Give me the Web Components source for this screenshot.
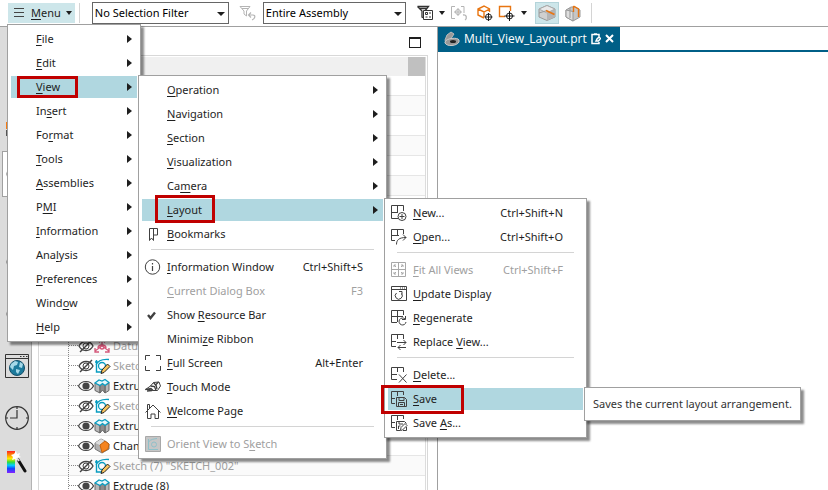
<!DOCTYPE html>
<html lang="en">
<head>
<meta charset="utf-8">
<title>Multi_View_Layout.prt</title>
<style>
  body {
    margin: 0;
    height: 100vh;
    overflow: hidden;
    background: #fff;
    color: #1e1e1e;
    font: 11px/20px "Noto Sans", "Open Sans", sans-serif;
  }
</style>
</head>
<body>
<nx-app>
  <nx-toolbar slot="toolbar">
    <nx-menu-button>
      <nx-menu style="--menu-width: 134px">
        <nx-item label="&amp;File" more></nx-item>
        <nx-item label="&amp;Edit" more></nx-item>
        <nx-item label="&amp;View" more active mark style="--mark: 1px auto auto 6px; --mark-width: 61px; --mark-height: 22px">
          <nx-menu slot="over" style="--menu-width: 249px">
            <nx-item label="&amp;Operation" more></nx-item>
            <nx-item label="&amp;Navigation" more></nx-item>
            <nx-item label="&amp;Section" more></nx-item>
            <nx-item label="&amp;Visualization" more></nx-item>
            <nx-item label="Ca&amp;mera" more></nx-item>
            <nx-item label="&amp;Layout" more active mark style="--mark: -3px auto auto 13px; --mark-width: 60px; --mark-height: 28px">
              <nx-menu slot="over" style="--menu-width: 203px">
                <nx-item label="&amp;New..." icon="new" keys="Ctrl+Shift+N"></nx-item>
                <nx-item label="&amp;Open..." icon="open" keys="Ctrl+Shift+O"></nx-item>
                <nx-separator></nx-separator>
                <nx-item label="&amp;Fit All Views" icon="fit" keys="Ctrl+Shift+F" disabled></nx-item>
                <nx-item label="&amp;Update Display" icon="update"></nx-item>
                <nx-item label="&amp;Regenerate" icon="regenerate"></nx-item>
                <nx-item label="Replace &amp;View..." icon="replace"></nx-item>
                <nx-separator></nx-separator>
                <nx-item label="&amp;Delete..." icon="delete"></nx-item>
                <nx-item label="&amp;Save" icon="save" active mark style="--mark: -2px auto auto -7px; --mark-width: 83px; --mark-height: 29px">
                  <nx-tooltip slot="over">Saves the current layout arrangement.</nx-tooltip>
                </nx-item>
                <nx-item label="Save &amp;As..." icon="saveas"></nx-item>
              </nx-menu>
            </nx-item>
            <nx-item label="&amp;Bookmarks" icon="bookmark"></nx-item>
            <nx-separator></nx-separator>
            <nx-item label="&amp;Information Window" icon="info" keys="Ctrl+Shift+S"></nx-item>
            <nx-item label="&amp;Current Dialog Box" keys="F3" disabled></nx-item>
            <nx-item label="Show &amp;Resource Bar" icon="check"></nx-item>
            <nx-item label="Minimi&amp;ze Ribbon"></nx-item>
            <nx-item label="&amp;Full Screen" icon="full" keys="Alt+Enter"></nx-item>
            <nx-item label="&amp;Touch Mode" icon="touch"></nx-item>
            <nx-item label="&amp;Welcome Page" icon="home"></nx-item>
            <nx-separator></nx-separator>
            <nx-item label="Orient View to S&amp;ketch" icon="orient" disabled></nx-item>
          </nx-menu>
        </nx-item>
        <nx-item label="In&amp;sert" more></nx-item>
        <nx-item label="Fo&amp;rmat" more></nx-item>
        <nx-item label="&amp;Tools" more></nx-item>
        <nx-item label="&amp;Assemblies" more></nx-item>
        <nx-item label="P&amp;MI" more></nx-item>
        <nx-item label="&amp;Information" more></nx-item>
        <nx-item label="Ana&amp;lysis" more></nx-item>
        <nx-item label="&amp;Preferences" more></nx-item>
        <nx-item label="Wind&amp;ow" more></nx-item>
        <nx-item label="&amp;Help" more></nx-item>
      </nx-menu>
    </nx-menu-button>
  </nx-toolbar>
  <nx-rail slot="rail"></nx-rail>
  <nx-navigator slot="navigator"></nx-navigator>
  <nx-graphics slot="graphics" name="Multi_View_Layout.prt"></nx-graphics>
</nx-app>

<script>
// 16px glyphs, stroked with the current colour
const ICONS = {
  new: '<path d="M7 13.500H.5V.5H12.500V6M.5 7.500H6.500M6.500 .5V8"/><circle cx="11" cy="11.500" r="4"/><path d="M8.500 11.500h5M11 9v5"/>',
  open: '<path d="M4 11.500H.5V.5H12.500V5M.5 6.500H8M6.500 .5V6.500"/><path d="M5.500 15.500C5.500 11 8 8.500 15 8.500M12 5.500l3 3-3 3"/>',
  fit: '<path d="M.5 .5h14v14H.5zM7.500 .5v14M.5 7.500h14M3 5V3h2M3 3l2 2M10 3h2v2M12 3l-2 2M3 10v2h2M3 12l2-2M10 12h2v-2M12 12l-2-2"/>',
  update: '<path d="M.5 .5h15v14H.5zM.5 3.500h15M9 2h1M11 2h1M13 2h1"/><path d="M5.500 7A3.500 3.500 0 1 0 10.500 7.500M8 5.500h3v3"/>',
  regenerate: '<path d="M6 12.500H.5V.5H12.500V5M.5 6.500H12M6.500 .5V12"/><path d="M14 9A3.500 3.500 0 1 0 15 12M14.500 6v3.500H11"/>',
  replace: '<path d="M5 12.500H.5V.5H12.500V5M.5 7.500H5M6.500 .5V5"/><path d="M6 8.500h9M12.500 6l2.500 2.500-2.500 2.500M15 13.500H7M9.500 11L7 13.500 9.500 16"/>',
  delete: '<path d="M6 12.500H.5V.5H12.500V5M.5 7.500H6M6.500 .5V5"/><path d="M8 7.500l7.500 8M15.500 7.500l-7.500 8"/>',
  save: '<path d="M4 12.500H.5V.5H12.500V4M.5 7.500H4M6.500 .5V5"/><path d="M5.500 6.500h8l2 2v7h-10zM8 6.500v3h5v-3M7.500 15.500v-4h6v4M9 13.500h3"/>',
  saveas: '<path d="M4 12.500H.5V.5H12.500V4M.5 7.500H4M6.500 .5V5"/><path d="M9 15.500H5.500v-9h8l2 2M8 6.500v2.500h4M7.500 14v-3h2M10 12.500l4-4 2 2-4.500 4.500-2 .5z M15.500 12v3.500H12"/>',
  bookmark: '<path d="M4.500 2.500v12l2-2.500 2 2.500V9M4.500 2.500h8v6.500H8.500V2.500"/>',
  info: '<circle cx="7.500" cy="8" r="7.200"/><path d="M7.500 7v5M7.500 4v1.500" stroke-width="1.200"/>',
  check: '<path d="M3 8l2.500 3L10 5.500" stroke-width="2.400"/>',
  full: '<path d="M.5 5V.5H5M11 .5h4.500V5M15.500 11v4.500H11M5 15.500H.5V11"/>',
  touch: '<path d="M.5 10.500l5-3.500 3-3.500 5.500-.5 1.500 4-3 4.500H8l-2.500-1z" /><path d="M.5 10.500l5.500-1 2 2M2 12l5-.5M5.500 7l4 .5 1.500 4M8.500 3.500l2.500 3M11 5.500l2.500-2.500M11 6l1 4" stroke-width="1.300"/>',
  home: '<path d="M.5 9.500L8 2l7.500 7.500M2.500 8v7.500h3.500V11h4v4.500h3.500V8M2.500 7V1.500h2V5"/>',
  orient: '<path d="M.5 .5h15v15H.5z" fill="#c6c6c6" stroke="#a8a8a8"/><g stroke="#8fc0c9"><path d="M3.500 3v10.500H13M3.500 6C6 3 9 3 12 2.500"/><circle cx="9" cy="8.500" r="2.500"/></g>',
  funnelUndo: '<path d="M1 1.500h10L7.500 6v5L5 9V6zM3 3.500h6"/><path d="M10 10h4c3 0 2 4-1 5M12 7.500L9.500 10l2.500 2.500" stroke-width="1.200"/>',
  funnelList: '<path d="M.5 1.500h11L8 6M.5 1.500L5 6v6l2 1M2 3.500h8" stroke-width="1.300"/><path d="M6.500 5.500h9v9h-9z" fill="#fff"/><path d="M8.500 7.500h2v2h-2zM8.500 12h2M12 8h2M12 12h2"/>',
  snap: '<path d="M4 1.500H.5v12H4M10 1.500h3V8M7 3v8M3 7h8"/><circle cx="7" cy="7" r="2.500"/><path d="M12 10c4-1 4 4 2 5" stroke-width="1.300"/>',
  orangeCube: '<path d="M12.500 7V4L7 1 1 4v6l6 3M1 4l6 3 5.500-3M7 7v5" stroke="#e87511" stroke-width="1.400"/><circle cx="11.500" cy="12" r="3" stroke="#222"/><path d="M11.500 8v8M7.500 12h8" stroke="#222"/>',
  orangeBox: '<path d="M6 11.500H.5V1.500h11V6" stroke="#e87511" stroke-width="1.400"/><circle cx="10.500" cy="11" r="3" stroke="#111"/><path d="M10.500 6v10M5.500 11h10" stroke="#111"/>',
  greyCube: '<path d="M0 4L8 .5 16 4v8l-8 3.500L0 12z" fill="#cfcfcf" stroke="#999"/><path d="M8 8v7.500L16 12V4z" fill="#b4b4b4" stroke="none"/><path d="M8 .5L16 4 8 8 0 4z" fill="#e9e9e9" stroke="#aaa"/><path d="M0 8l8-2.500" stroke="#999"/><path d="M7 5.500l8.500 4" stroke="#e87511" stroke-width="1.800"/>',
  splitCube: '<path d="M1 5l5-3h4l5 3v7l-7 4-7-4z" fill="#c6c6c6" stroke="#999"/><path d="M8 6.500V16l-7-4V5z" fill="#dedede" stroke="#999"/><path d="M5 3v10" stroke="#999"/><path d="M8.500 1l5 3v8M8.500 1v6" stroke="#e87511" stroke-width="1.400"/>',
  hidden: '<path d="M1 8c3-6 11-6 14 0-3 6-11 6-14 0z" stroke-width="1.300"/><circle cx="8" cy="8" r="3"/><path d="M2 14L14 2" stroke-width="1.400"/>',
  shown: '<path d="M.5 8c3-6 12-6 15 0-3 6-12 6-15 0z" stroke-width="1.200"/><circle cx="8" cy="8" r="3.600" fill="#444" stroke="none"/>',
  datum: '<g stroke="#d4587a" stroke-width="1.300"><path d="M8 1v7l-7 5M8 8l7 5M5 4.500l3-3 3 3M1 10v4h4M15 10v4h-4M4 10c0-4 8-4 8 0"/><circle cx="8" cy="9" r="2"/></g>',
  sketch: '<path d="M2.500 2v12H8M1 4h3M2 7C4 2 9 1 15 1.500" stroke="#089cc0" stroke-width="1.400"/><circle cx="8" cy="8" r="3.500" stroke="#089cc0" stroke-width="1.300"/><path d="M7 15.500l1-3.500 5.500-6 2.500 2.500L10 14.500z" fill="#f6c35c" stroke="#222"/>',
  extrude: '<path d="M1 5l5 2.500V15l-5-2.500zM11 7.500L15 5v7.500L11 15z" fill="#b8b8b8" stroke="#666"/><path d="M6 7.500l2.500-2L11 7.500V15l-2.500-3L6 15z" fill="#8c8c8c" stroke="#666"/><path d="M1 5l4-3 3 1 3-1.500L15 4.500 11 7.500 8.500 5.500 6 7.500z" fill="#e4f6fa" stroke="#089cc0" stroke-width="1.200"/>',
  chamfer: '<path d="M1 5l6-4 4 2 4 3v5l-7 4-7-4z" fill="#b0b0b0" stroke="#777"/><path d="M1 5l6-4 4 2-5 4z" fill="#ddd" stroke="none"/><path d="M6 7l5-4 4 3-1 5-6 3.500z" fill="#f5841f" stroke="#c56510"/>',
};

function icon (name, size = 16) {
  const art = ICONS[name];
  return art ? `<svg width="${size}" height="${size}" viewBox="0 0 16 16" fill="none" stroke="currentColor" overflow="visible" aria-hidden="true">${art}</svg>` : '';
}

// "&" marks the access key, as in "Ca&mera"
function accessKey (label) {
  return label.replace(/&(.)/, '<u>$1</u>');
}

class NxElement extends HTMLElement {
  constructor () {
    super();
    this.attachShadow({ mode: 'open' });
  }

  connectedCallback () {
    this.shadowRoot.innerHTML = `<style>${this.styles}</style>${this.render()}`;
  }

  get styles () { return ':host { display: block; }'; }

  render () { return '<slot></slot>'; }
}

class NxApp extends NxElement {
  get styles () {
    return `
    :host {
      display: grid;
      grid-template: auto 1fr / auto auto 1fr;
      height: 100vh;
    }
    header {
      grid-column: 1 / -1;
      z-index: 1;
    }
    ::slotted(*) { min-height: 0; }
    `;
  }

  render () {
    return `
    <header><slot name="toolbar"></slot></header>
    <slot name="rail"></slot>
    <slot name="navigator"></slot>
    <slot name="graphics"></slot>`;
  }
}

class NxToolbar extends NxElement {
  get styles () {
    return `
    :host {
      display: flex;
      align-items: center;
      height: 26px;
      padding-left: 8px;
      border-bottom: 1px solid #a0a0a0;
      color: #333;
    }
    .rule {
      width: 1px;
      height: 20px;
      background: #d4d4d4;
    }
    .rule.first { margin: 0 12px 0 4px; }
    .combo {
      position: relative;
      display: block;
      height: 22px;
    }
    .filter { width: 137px; }
    .scope { width: 143px; }
    select {
      appearance: none;
      width: 100%;
      height: 22px;
      padding: 0 20px 0 2px;
      border: 1px solid #666;
      border-radius: 0;
      background: #fff;
      color: #000;
      font: inherit;
    }
    .arrow {
      border: 4px solid transparent;
      border-top-color: #1e1e1e;
      border-bottom: 0;
    }
    .combo .arrow {
      position: absolute;
      right: 4px;
      top: 10px;
      pointer-events: none;
    }
    button {
      display: flex;
      align-items: center;
      justify-content: center;
      gap: 6px;
      height: 22px;
      min-width: 24px;
      padding: 0;
      border: 0;
      background: none;
      color: inherit;
    }
    button .arrow { border-width: 4px 3px 0; }
    button.drop.wide { padding: 0 6px 0 0; }
    button.dim { color: #b4b4b4; }
    button.on {
      background: #cde6ea;
      box-shadow: inset 0 0 0 1px #b4d4da;
    }
    .undo { margin: 0 4px 0 6px; }
    .tools {
      display: flex;
      gap: 2px;
      padding: 0 6px 0 11px;
    }
    `;
  }

  render () {
    return `
    <slot></slot>
    <span class="rule first"></span>
    <label class="combo filter">
      <select aria-label="Selection filter"><option>No Selection Filter</option></select>
      <span class="arrow"></span>
    </label>
    <button class="dim undo" aria-label="Reset filters">${icon('funnelUndo')}</button>
    <label class="combo scope">
      <select aria-label="Selection scope"><option>Entire Assembly</option></select>
      <span class="arrow"></span>
    </label>
    <div class="tools">
      <button class="drop" aria-label="General filters">${icon('funnelList')}<span class="arrow"></span></button>
      <button class="dim" aria-label="Snap point">${icon('snap')}</button>
      <button aria-label="Highlight body">${icon('orangeCube')}</button>
      <button class="drop wide" aria-label="Rectangle select">${icon('orangeBox')}<span class="arrow"></span></button>
      <button class="on" aria-label="Shaded edges">${icon('greyCube')}</button>
      <button aria-label="Clip section">${icon('splitCube')}</button>
    </div>
    <span class="rule"></span>`;
  }
}

class NxMenuButton extends NxElement {
  get styles () {
    return `
    :host {
      display: block;
      position: relative;
    }
    button {
      display: flex;
      align-items: center;
      height: 20px;
      padding: 0 3px 0 6px;
      border: 0;
      background: #cde6ea;
      color: #1e1e1e;
      font: inherit;
    }
    u { text-underline-offset: 2px; }
    svg { margin-right: 7px; }
    .arrow {
      margin-left: 5px;
      border: 3px solid transparent;
      border-top: 4px solid #1e1e1e;
      border-bottom: 0;
    }
    ::slotted(nx-menu) {
      position: absolute;
      left: -1px;
      top: 21px;
    }
    `;
  }

  render () {
    return `
    <button aria-haspopup="menu" aria-expanded="true">
      <svg width="10" height="10" viewBox="0 0 10 10" stroke="#444" aria-hidden="true"><path d="M0 .5h10M0 4.500h10M0 8.500h10"/></svg>
      <span><u>M</u>enu</span>
      <span class="arrow"></span>
    </button>
    <slot></slot>`;
  }
}

class NxMenu extends NxElement {
  get styles () {
    return `
    :host {
      display: block;
      box-sizing: border-box;
      min-width: var(--menu-width);
      padding: 2px 3px;
      border: 1px solid #a0a0a0;
      background: #fff;
      box-shadow: 3px 3px 2px rgba(0, 0, 0, .45);
    }
    `;
  }

  connectedCallback () {
    super.connectedCallback();
    this.setAttribute('role', 'menu');
  }
}

class NxItem extends NxElement {
  get styles () {
    return `
    :host {
      display: block;
      position: relative;
      padding: 1px 0;
    }
    button {
      display: grid;
      grid-template-columns: 25px 1fr auto 20px;
      align-items: center;
      width: 100%;
      height: 22px;
      padding: 0;
      border: 0;
      background: none;
      color: #1e1e1e;
      font: inherit;
      text-align: left;
      white-space: nowrap;
    }
    :host([active]) button { background: #b0d7e0; }
    button:disabled { color: #a0a0a0; }
    u { text-underline-offset: 2px; }
    .icon {
      display: flex;
      padding-left: 3px;
      color: #404040;
    }
    button:disabled .icon { color: #a8a8a8; }
    .more {
      justify-self: end;
      margin-right: 5px;
      border: 4px solid transparent;
      border-left: 5px solid #1e1e1e;
      border-right: 0;
    }
    .mark {
      position: absolute;
      box-sizing: border-box;
      inset: var(--mark);
      width: var(--mark-width);
      height: var(--mark-height);
      border: 3px solid #c00000;
      pointer-events: none;
      z-index: 1;
    }
    ::slotted(*) {
      position: absolute;
      left: calc(100% + 1px);
      top: 0;
      z-index: 1;
    }
    `;
  }

  render () {
    const off = this.hasAttribute('disabled') ? 'disabled' : '';
    return `
    <button role="menuitem" ${off}>
      <span class="icon">${icon(this.getAttribute('icon'))}</span>
      <span>${accessKey(this.getAttribute('label'))}</span>
      <span>${this.getAttribute('keys') || ''}</span>
      ${this.hasAttribute('more') ? '<span class="more"></span>' : ''}
    </button>
    ${this.hasAttribute('mark') ? '<span class="mark"></span>' : ''}
    <slot name="over"></slot>`;
  }
}

class NxSeparator extends NxElement {
  get styles () {
    return `
    :host {
      display: block;
      height: 1px;
      margin: 3px 9px 5px;
      background: #d4d4d4;
    }
    `;
  }
}

class NxTooltip extends NxElement {
  get styles () {
    return `
    :host {
      display: block;
      padding: 6px 8px;
      border: 1px solid #a0a0a0;
      background: #fff;
      box-shadow: 3px 3px 2px rgba(0, 0, 0, .45);
      white-space: nowrap;
    }
    `;
  }
}

class NxRail extends NxElement {
  get styles () {
    return `
    :host {
      display: grid;
      grid-template-rows: 44px 46px 39px repeat(4, 52px) 36px;
      box-sizing: border-box;
      width: 32px;
      padding: 80px 0 0 2px;
      border-right: 1px solid #b4b4b4;
      background: #dcdcdc;
      overflow: hidden;
    }
    button {
      display: grid;
      place-items: center;
      padding: 0;
      border: 1px solid transparent;
      border-right: 0;
      background: none;
    }
    button.on {
      border-color: #a0a0a0;
      background: #fff;
    }
    `;
  }

  render () {
    const dot = '<svg width="22" height="22" viewBox="0 0 22 22" fill="none" stroke="#444"><circle cx="11" cy="11" r="10"/></svg>';
    return `
    <button aria-label="Assembly Navigator"><svg width="22" height="14" viewBox="0 0 22 14"><path d="M0 0h18v7H0z" fill="#f57c14"/><path d="M0 8h18v6H0z" fill="#555"/></svg></button>
    <button class="on" aria-label="Part Navigator">${dot}</button>
    <button aria-label="Reuse Library"></button>
    <button aria-label="HD3D Tools">${dot}</button>
    <button aria-label="Roles">${dot}</button>
    <button aria-label="Web Browser">
      <svg width="24" height="24" viewBox="0 0 24 24" fill="none" stroke="#333">
        <path d="M.5 .5h23v23H.5zM.5 4.500h23M15 2.500h1.500M18 2.500h1.500M21 2.500h1.500"/>
        <circle cx="12" cy="14" r="7.500" fill="#1c7a9c" stroke="#15506a"/>
        <path d="M6 10l4-3 3 1-1 3-3 1-1 4-3-3zM15 8l3 2-1 4-3-1zM11 15l4 1-2 4-2-2z" fill="#a5d8e8" stroke="none"/>
      </svg>
    </button>
    <button aria-label="History">
      <svg width="24" height="24" viewBox="0 0 24 24" fill="none" stroke="#333" stroke-width="1.200">
        <circle cx="12" cy="12" r="11.300"/><path d="M12 4v8H5M12 1v2M12 21v2M1 12h2M21 12h2"/>
      </svg>
    </button>
    <button aria-label="Appearance">
      <svg width="20" height="22" viewBox="0 0 20 22">
        <linearGradient id="hue" x2="0" y2="1">
          <stop offset="0" stop-color="#f22"/><stop offset=".2" stop-color="#f90"/><stop offset=".35" stop-color="#fe0"/>
          <stop offset=".5" stop-color="#3d3"/><stop offset=".65" stop-color="#0cf"/><stop offset=".8" stop-color="#14f"/><stop offset="1" stop-color="#82f"/>
        </linearGradient>
        <path d="M0 0h8v22H0z" fill="url(#hue)"/>
        <path d="M10 7l8 13" stroke="#111" stroke-width="3" stroke-linecap="round"/>
        <path d="M9 0l1 3 3-1-1 3 2 1-3 1-1 3-2-2-3 1 1-3-2-2 3-1z" fill="#fff"/><path d="M10 7l2 3" stroke="#ddd" stroke-width="2"/>
      </svg>
    </button>`;
  }
}

class NxNavigator extends NxElement {
  get rows () {
    return [
      ...Array(13).fill(['', '', '']),
      ['hidden', 'datum', 'Datum'],
      ['hidden', 'sketch', 'Sketch'],
      ['shown', 'extrude', 'Extrude'],
      ['hidden', 'sketch', 'Sketch'],
      ['shown', 'extrude', 'Extrude'],
      ['shown', 'chamfer', 'Chamfer'],
      ['hidden', 'sketch', 'Sketch (7) "SKETCH_002"'],
      ['shown', 'extrude', 'Extrude (8)'],
    ];
  }

  get styles () {
    return `
    :host {
      display: flex;
      flex-direction: column;
      box-sizing: border-box;
      width: 405px;
      padding: 0 9px 0 6px;
      overflow: hidden;
    }
    .caption {
      display: flex;
      justify-content: flex-end;
      align-items: center;
      flex: none;
      height: 28px;
      padding: 2px 7px 0 0;
      box-sizing: border-box;
    }
    .caption button {
      width: 12px;
      height: 11px;
      padding: 0;
      border: 1px solid #1e1e1e;
      border-top-width: 2px;
      background: none;
    }
    .list {
      flex: 1;
      padding: 1px 1px 0;
      border: 1px solid #d8d8d8;
      border-bottom: 0;
      overflow: hidden;
    }
    table {
      width: 100%;
      border-collapse: separate;
      border-spacing: 0;
      border-right: 1px solid #dcdcdc;
    }
    th, td { padding: 0; }
    th {
      height: 19px;
      background: #f0f0f0;
    }
    th.corner {
      width: 17px;
      background: #c0c0c0;
    }
    td {
      height: 19px;
      border-bottom: 1px solid #e6e6e6;
    }
    tr:nth-child(even) td { background: #fafafa; }
    tr.off { color: #a0a0a0; }
    .row {
      display: flex;
      align-items: center;
      height: 19px;
      margin-left: 28px;
      border-left: 1px dotted #888;
      line-height: 16px;
    }
    .row::before {
      content: "";
      width: 9px;
      border-top: 1px dotted #888;
    }
    svg { color: #444; }
    .name { margin-left: 3px; }
    `;
  }

  render () {
    return `
    <div class="caption"><button aria-label="Maximize"></button></div>
    <div class="list">
      <table>
        <thead><tr><th></th><th class="corner"></th></tr></thead>
        <tbody>
        ${this.rows.map(([eye, kind, name]) => `
          <tr class="${eye === 'hidden' ? 'off' : ''}"><td colspan="2"><div class="row">${icon(eye)}${icon(kind)}<span class="name">${name}</span></div></td></tr>
        `).join('')}
        </tbody>
      </table>
    </div>`;
  }
}

class NxGraphics extends NxElement {
  get styles () {
    return `
    :host {
      display: block;
      border-left: 1px solid #a0a0a0;
    }
    nav {
      display: flex;
      height: 23px;
      border-bottom: 2px solid #005f87;
    }
    .tab {
      display: flex;
      align-items: center;
      padding: 0 6px;
      background: #005f87;
      color: #fff;
    }
    a {
      display: flex;
      align-items: center;
      gap: 4px;
      color: inherit;
      font: 12px/20px "Open Sans", "Noto Sans", sans-serif;
      text-decoration: none;
    }
    .pin { margin: 0 4px; }
    button {
      display: flex;
      padding: 0;
      border: 0;
      background: none;
    }
    `;
  }

  render () {
    return `
    <nav>
      <div class="tab">
        <a href="#">
          <svg width="16" height="16" viewBox="0 0 16 16" aria-hidden="true"><path d="M3 4l4-3 3 2-4 6-4 3-1-3z" fill="#999" stroke="#bbb"/><path d="M1 11c1-4 13-5 14-2v2c-2 4-12 5-14 1z" fill="#999" stroke="#ccc"/><ellipse cx="9" cy="10.500" rx="3" ry="1.500" fill="#222"/></svg>
          <span>${this.getAttribute('name')}</span>
        </a>
        <svg class="pin" width="10" height="12" viewBox="0 0 10 12" fill="none" stroke="#fff" stroke-width="1.500" aria-hidden="true"><path d="M8 3.500V1.500H1v9h7V9M3 1h3M5 8l1-2 2-2 1.500 1.500L7.500 8z"/></svg>
        <button aria-label="Close tab"><svg width="9" height="9" viewBox="0 0 9 9" stroke="#fff" stroke-width="2"><path d="M1 1l7 7M8 1L1 8"/></svg></button>
      </div>
    </nav>`;
  }
}

customElements.define('nx-app', NxApp);
customElements.define('nx-toolbar', NxToolbar);
customElements.define('nx-menu-button', NxMenuButton);
customElements.define('nx-menu', NxMenu);
customElements.define('nx-item', NxItem);
customElements.define('nx-separator', NxSeparator);
customElements.define('nx-tooltip', NxTooltip);
customElements.define('nx-rail', NxRail);
customElements.define('nx-navigator', NxNavigator);
customElements.define('nx-graphics', NxGraphics);
</script>
</body>
</html>
